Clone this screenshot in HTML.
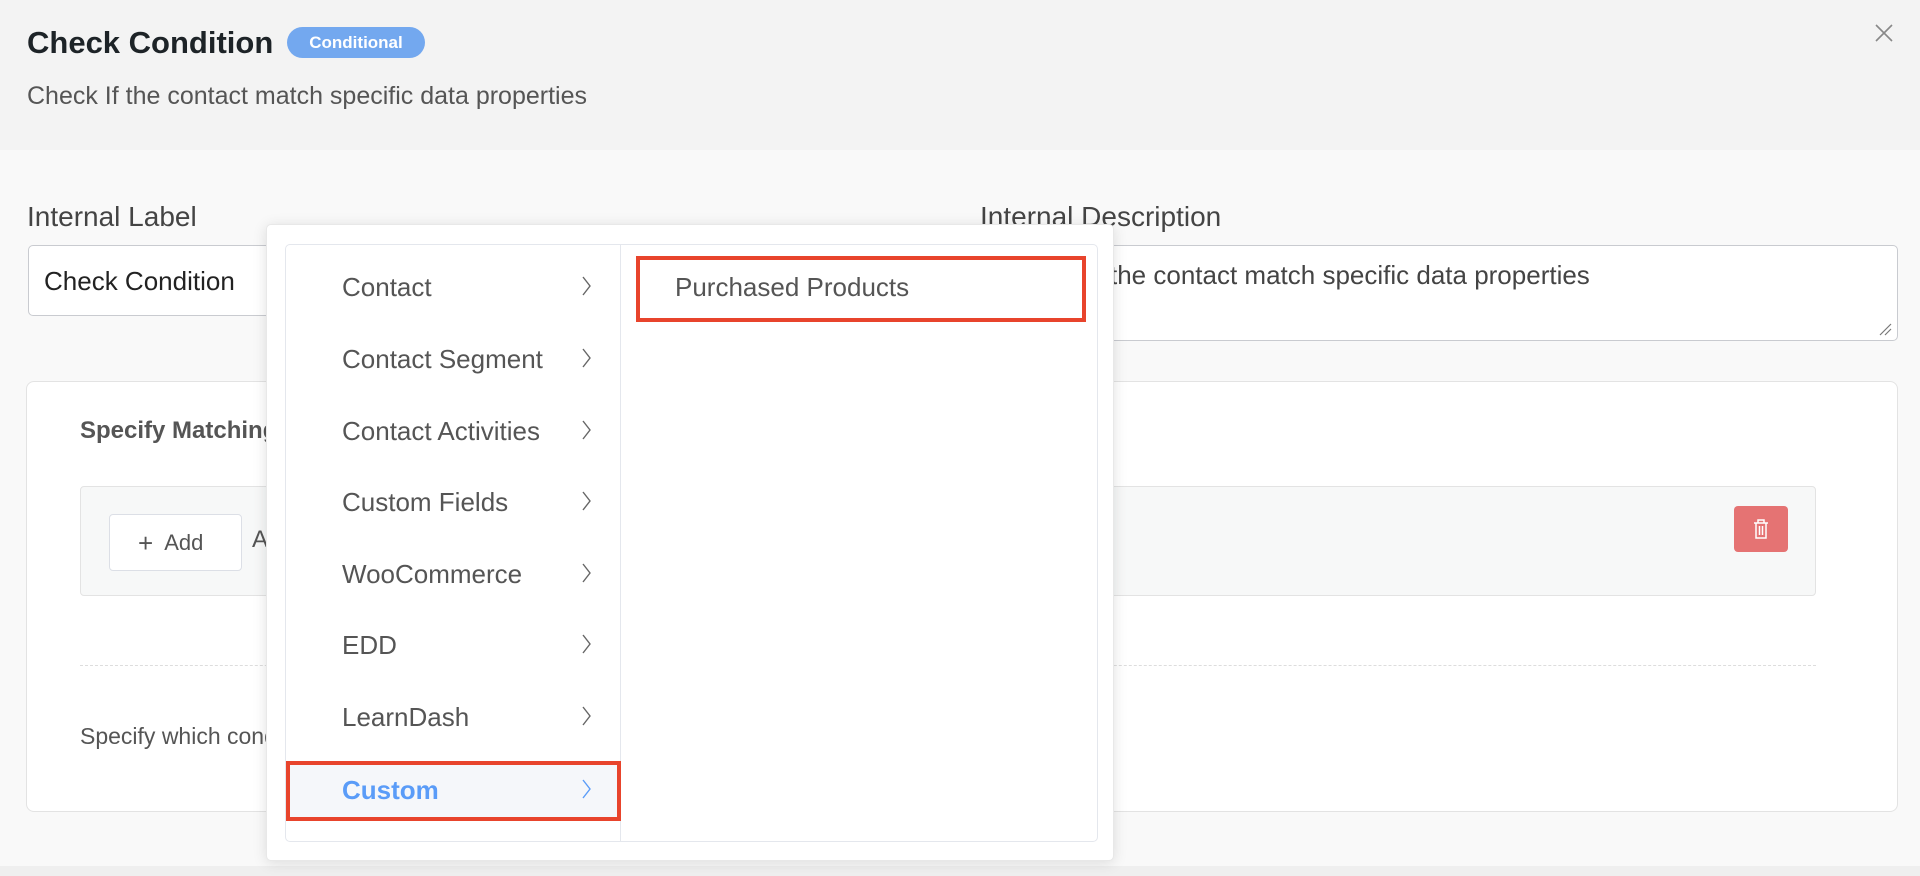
<!DOCTYPE html>
<html><head><meta charset="utf-8"><style>
*{box-sizing:border-box;margin:0;padding:0}
body{width:1920px;height:876px;overflow:hidden;background:#f9f9f9;font-family:"Liberation Sans",Arial,sans-serif;color:#555;position:relative}
.abs{position:absolute}
.hdr{left:0;top:0;width:1920px;height:150px;background:#f3f3f3}
.title{left:27px;top:25px;font-size:31px;font-weight:bold;color:#1d2327}
.badge{left:287px;top:27px;width:138px;height:31px;border-radius:16px;background:#73a8ef;color:#fff;font-size:17px;font-weight:bold;text-align:center;line-height:31px}
.sub{left:27px;top:82px;font-size:25px;color:#555}
.lbl{font-size:28px;color:#444}
.inp{background:#fff;border:1px solid #c9cbd0;border-radius:5px}
.card{left:26px;top:381px;width:1872px;height:431px;background:#fff;border:1px solid #e3e3e3;border-radius:8px}
.menu{font-size:26px;color:#555}
.row{position:absolute;left:342px;height:72px;line-height:72px}
</style></head><body>
<div class="abs hdr"></div>
<div class="abs title">Check Condition</div>
<div class="abs badge">Conditional</div>
<div class="abs sub">Check If the contact match specific data properties</div>
<svg class="abs" style="left:1874px;top:23px" width="20" height="20" viewBox="0 0 20 20"><path d="M2 2L18 18M18 2L2 18" stroke="#888" stroke-width="1.6"/></svg>
<div class="abs" style="left:0;top:866px;width:1920px;height:10px;background:#efefef"></div>

<div class="abs lbl" style="left:27px;top:201px">Internal Label</div>
<div class="abs inp" style="left:28px;top:245px;width:300px;height:71px"></div>
<div class="abs" style="left:44px;top:266px;font-size:26px;color:#222">Check Condition</div>

<div class="abs lbl" style="left:980px;top:201px">Internal Description</div>
<div class="abs inp" style="left:980px;top:245px;width:918px;height:96px"></div>
<div class="abs" style="left:1110px;top:260px;font-size:26px;color:#444">the contact match specific data properties</div>
<svg class="abs" style="left:1878px;top:322px" width="14" height="14"><path d="M2 13L13 2M7 13L13 7" stroke="#777" stroke-width="1.2"/></svg>

<div class="abs card"></div>
<div class="abs" style="left:80px;top:417px;font-size:24px;font-weight:bold;color:#555">Specify Matching Conditions</div>
<div class="abs" style="left:80px;top:486px;width:1736px;height:110px;background:#f7f8f8;border:1px solid #e3e3e3;border-radius:4px"></div>
<div class="abs" style="left:109px;top:514px;width:133px;height:57px;background:#fff;border:1px solid #dcdfe6;border-radius:4px;font-size:22px;color:#555;line-height:55px;padding-left:28px"><span style="font-size:26px;font-weight:300;vertical-align:-2px">+</span>&nbsp; Add</div>
<div class="abs" style="left:252px;top:526px;font-size:24px;color:#555">And</div>
<div class="abs" style="left:1734px;top:506px;width:54px;height:46px;background:#e57373;border-radius:4px"></div>
<svg class="abs" style="left:1751px;top:518px" width="20" height="22" viewBox="0 0 20 22"><path d="M3 5H17M7 5V2H13V5M5 5V20H15V5M8.5 8V17M11.5 8V17" fill="none" stroke="#fff" stroke-width="1.5"/></svg>
<div class="abs" style="left:80px;top:723px;font-size:23px;color:#555">Specify which conditions should match to proceed: all blocks, any blocks or no blocks</div>
<div class="abs" style="left:80px;top:665px;width:1736px;border-top:1px dashed #ddd"></div>

<!-- popup -->
<div class="abs" style="left:266px;top:224px;width:848px;height:637px;background:#fff;border:1px solid #e8e8e8;border-radius:5px;box-shadow:0 2px 14px rgba(0,0,0,.12)"></div>
<div class="abs" style="left:285px;top:244px;width:813px;height:598px;background:#fff;border:1px solid #e4e7ed;border-radius:5px"></div>
<div class="abs" style="left:620px;top:245px;width:1px;height:596px;background:#e4e7ed"></div>
<div class="abs" style="left:286px;top:762px;width:334px;height:57px;background:#f5f7fa"></div>
<div class="menu">
<div class="row" style="top:251px">Contact</div>
<div class="row" style="top:323px">Contact Segment</div>
<div class="row" style="top:395px">Contact Activities</div>
<div class="row" style="top:466px">Custom Fields</div>
<div class="row" style="top:538px">WooCommerce</div>
<div class="row" style="top:609px">EDD</div>
<div class="row" style="top:681px">LearnDash</div>
<div class="row" style="top:754px;color:#5a9cf8;font-weight:bold">Custom</div>
</div>
<svg class="abs" style="left:580px;top:0" width="20" height="876">
<g fill="none" stroke="#666" stroke-width="1.4">
<path d="M3 277L10 286L3 295"/><path d="M3 349L10 358L3 367"/><path d="M3 421L10 430L3 439"/><path d="M3 492L10 501L3 510"/><path d="M3 564L10 573L3 582"/><path d="M3 635L10 644L3 653"/><path d="M3 707L10 716L3 725"/>
<path d="M3 780L10 789L3 798" stroke="#5a9cf8"/></g></svg>
<div class="abs" style="left:286px;top:761px;width:335px;height:60px;border:4px solid #e8442c"></div>
<div class="abs" style="left:636px;top:256px;width:450px;height:66px;border:4px solid #e8442c"></div>
<div class="abs" style="left:675px;top:272px;font-size:26px;color:#555">Purchased Products</div>
</body></html>
